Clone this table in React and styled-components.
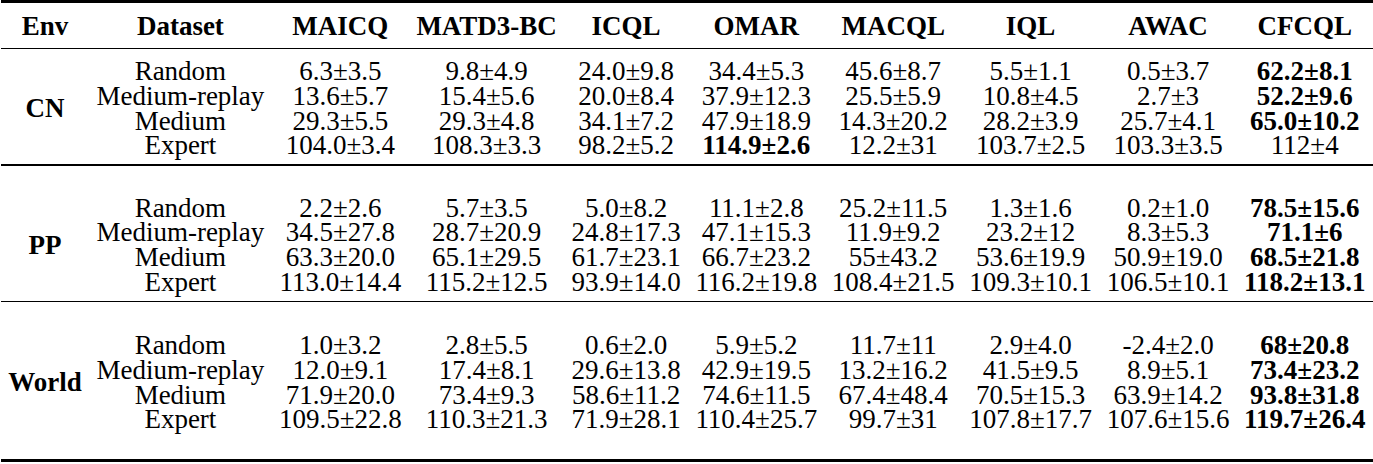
import React from 'react'
import styled, { createGlobalStyle } from 'styled-components'

const GlobalStyle = createGlobalStyle`
    body {
        margin: 0;
        background: #fff;
    }
`

const columns = ['MAICQ', 'MATD3-BC', 'ICQL', 'OMAR', 'MACQL', 'IQL', 'AWAC', 'CFCQL']

// a value written with a leading * is printed in bold
const blocks = [
    {
        env: 'CN',
        before: 10,
        rows: [
            ['Random', '6.3±3.5', '9.8±4.9', '24.0±9.8', '34.4±5.3', '45.6±8.7', '5.5±1.1', '0.5±3.7', '*62.2±8.1'],
            ['Medium-replay', '13.6±5.7', '15.4±5.6', '20.0±8.4', '37.9±12.3', '25.5±5.9', '10.8±4.5', '2.7±3', '*52.2±9.6'],
            ['Medium', '29.3±5.5', '29.3±4.8', '34.1±7.2', '47.9±18.9', '14.3±20.2', '28.2±3.9', '25.7±4.1', '*65.0±10.2'],
            ['Expert', '104.0±3.4', '108.3±3.3', '98.2±5.2', '*114.9±2.6', '12.2±31', '103.7±2.5', '103.3±3.5', '112±4'],
        ],
    },
    {
        env: 'PP',
        before: 30,
        rows: [
            ['Random', '2.2±2.6', '5.7±3.5', '5.0±8.2', '11.1±2.8', '25.2±11.5', '1.3±1.6', '0.2±1.0', '*78.5±15.6'],
            ['Medium-replay', '34.5±27.8', '28.7±20.9', '24.8±17.3', '47.1±15.3', '11.9±9.2', '23.2±12', '8.3±5.3', '*71.1±6'],
            ['Medium', '63.3±20.0', '65.1±29.5', '61.7±23.1', '66.7±23.2', '55±43.2', '53.6±19.9', '50.9±19.0', '*68.5±21.8'],
            ['Expert', '113.0±14.4', '115.2±12.5', '93.9±14.0', '116.2±19.8', '108.4±21.5', '109.3±10.1', '106.5±10.1', '*118.2±13.1'],
        ],
    },
    {
        env: 'World',
        before: 31,
        rows: [
            ['Random', '1.0±3.2', '2.8±5.5', '0.6±2.0', '5.9±5.2', '11.7±11', '2.9±4.0', '-2.4±2.0', '*68±20.8'],
            ['Medium-replay', '12.0±9.1', '17.4±8.1', '29.6±13.8', '42.9±19.5', '13.2±16.2', '41.5±9.5', '8.9±5.1', '*73.4±23.2'],
            ['Medium', '71.9±20.0', '73.4±9.3', '58.6±11.2', '74.6±11.5', '67.4±48.4', '70.5±15.3', '63.9±14.2', '*93.8±31.8'],
            ['Expert', '109.5±22.8', '110.3±21.3', '71.9±28.1', '110.4±25.7', '99.7±31', '107.8±17.7', '107.6±15.6', '*119.7±26.4'],
        ],
    },
]

const App = () => {
    return (
        <>
            <GlobalStyle />
            <Table>
                <Rule $heavy $below={11} />
                <Head>Env</Head>
                <Head>Dataset</Head>
                {columns.map((name) => <Head key={name}>{name}</Head>)}
                {blocks.map((block, b) => (
                    <React.Fragment key={block.env}>
                        <Rule $above={b === 0 ? 9.5 : 6} $below={block.before} />
                        <EnvLabel>{block.env}</EnvLabel>
                        {block.rows.map((row) =>
                            row.map((value, i) => {
                                const bold = value.startsWith('*')
                                return (
                                    <Cell key={block.env + row[0] + i} $bold={bold}>
                                        {bold ? value.slice(1) : value}
                                    </Cell>
                                )
                            })
                        )}
                    </React.Fragment>
                ))}
                <Rule $heavy $above={27} />
            </Table>
        </>
    )
}

const Table = styled.div`
    display: grid;
    grid-template-columns: repeat(10, auto);
    width: max-content;
    margin-left: 1px;
    font-family: "Liberation Serif", "Times New Roman", serif;
    font-size: 27px;
    line-height: 24.8px;
    color: #000;
`

const Rule = styled.div`
    grid-column: 1 / -1;
    height: ${(p) => (p.$heavy ? '2.5px' : '1.3px')};
    background: #000;
    margin-top: ${(p) => p.$above || 0}px;
    margin-bottom: ${(p) => p.$below || 0}px;
`

const Cell = styled.div`
    padding: 0 7.3px;
    text-align: center;
    white-space: nowrap;
    font-weight: ${(p) => (p.$bold ? 700 : 400)};
`

const Head = styled(Cell)`
    font-weight: 700;
`

const EnvLabel = styled(Cell)`
    grid-row: span 4;
    align-self: center;
    font-weight: 700;
`

export default App
